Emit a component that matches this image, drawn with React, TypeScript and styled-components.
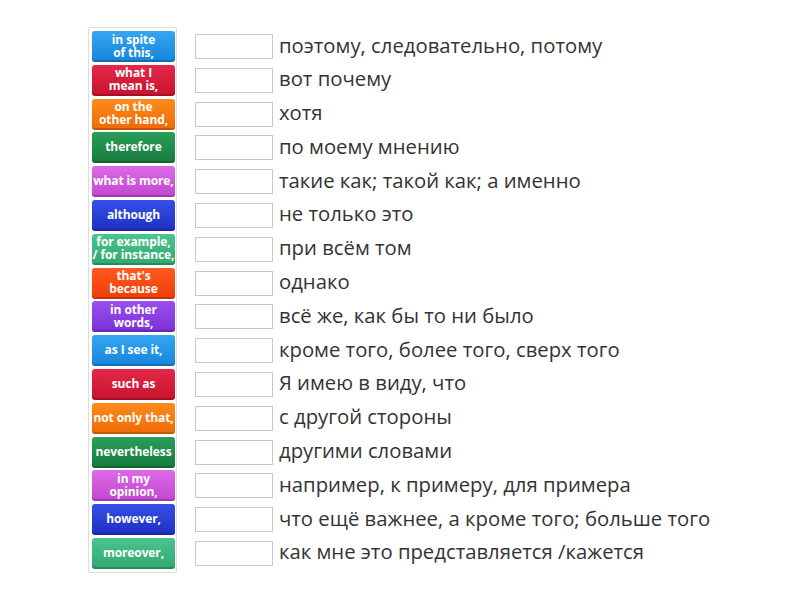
import styled, { createGlobalStyle } from 'styled-components'

const GlobalStyle = createGlobalStyle`
  html, body {
    margin: 0;
    padding: 0;
    background: #ffffff;
  }
  body {
    font-family: 'Open Sans', 'Liberation Sans', sans-serif;
  }
`

const palette = {
  blue: ['#36a6f2', '#1684dc'],
  red: ['#e62848', '#c5122f'],
  orange: ['#ff8a1c', '#ee6a05'],
  green: ['#2a9e58', '#177a3c'],
  magenta: ['#dc6ae6', '#c047d0'],
  navy: ['#3550e6', '#1f2fc4'],
  teal: ['#4cc490', '#30a86f'],
  vermilion: ['#ff5a1e', '#ef3d08'],
  purple: ['#9a50ee', '#7a30d6'],
} as const

type Tone = keyof typeof palette

const tiles: { label: string; tone: Tone }[] = [
  { label: 'in spite\nof this,', tone: 'blue' },
  { label: 'what I\nmean is,', tone: 'red' },
  { label: 'on the\nother hand,', tone: 'orange' },
  { label: 'therefore', tone: 'green' },
  { label: 'what is more,', tone: 'magenta' },
  { label: 'although', tone: 'navy' },
  { label: 'for example,\n/ for instance,', tone: 'teal' },
  { label: "that's\nbecause", tone: 'vermilion' },
  { label: 'in other\nwords,', tone: 'purple' },
  { label: 'as I see it,', tone: 'blue' },
  { label: 'such as', tone: 'red' },
  { label: 'not only that,', tone: 'orange' },
  { label: 'nevertheless', tone: 'green' },
  { label: 'in my\nopinion,', tone: 'magenta' },
  { label: 'however,', tone: 'navy' },
  { label: 'moreover,', tone: 'teal' },
]

const meanings = [
  'поэтому, следовательно, потому',
  'вот почему',
  'хотя',
  'по моему мнению',
  'такие как; такой как; а именно',
  'не только это',
  'при всём том',
  'однако',
  'всё же, как бы то ни было',
  'кроме того, более того, сверх того',
  'Я имею в виду, что',
  'с другой стороны',
  'другими словами',
  'например, к примеру, для примера',
  'что ещё важнее, а кроме того; больше того',
  'как мне это представляется /кажется',
]

const Page = styled.div`
  display: flex;
  gap: 18px;
  padding: 27px 0 0 88px;
`

const Bank = styled.div`
  width: 83px;
  padding: 3px 1px 3px 3px;
  border: 1px solid #dcdcdc;
  border-radius: 2px;
  display: flex;
  flex-direction: column;
  gap: 2.8px;
`

const Tile = styled.div<{ $tone: Tone }>`
  height: 31px;
  border-radius: 3px;
  background: linear-gradient(
    to bottom,
    ${({ $tone }) => palette[$tone][0]},
    ${({ $tone }) => palette[$tone][1]}
  );
  box-shadow: inset 0 -2px 0 rgba(0, 0, 0, 0.18);
  color: #ffffff;
  font-family: 'Open Sans', 'Liberation Sans', sans-serif;
  font-weight: 700;
  font-size: 12px;
  line-height: 13px;
  letter-spacing: -0.1px;
  text-align: center;
  white-space: pre;
  overflow: hidden;
  display: flex;
  align-items: center;
  justify-content: center;
  padding-bottom: 2px;
  box-sizing: border-box;
`

const Targets = styled.div`
  display: flex;
  flex-direction: column;
  gap: 2.8px;
  padding-top: 4px;
`

const Row = styled.div`
  height: 31px;
  display: flex;
  align-items: center;
  gap: 6px;
`

const Slot = styled.div`
  width: 78px;
  height: 25px;
  flex-shrink: 0;
  box-sizing: border-box;
  border: 1px solid #c8c8c8;
  background: #ffffff;
`

const Meaning = styled.span`
  font-family: 'Open Sans', 'Liberation Sans', sans-serif;
  font-size: 20.3px;
  line-height: 26px;
  color: #333333;
  white-space: nowrap;
  margin-top: -4px;
`

export default function App() {
  return (
    <>
      <GlobalStyle />
      <Page>
        <Bank>
          {tiles.map((t) => (
            <Tile key={t.label} $tone={t.tone}>
              {t.label}
            </Tile>
          ))}
        </Bank>
        <Targets>
          {meanings.map((m) => (
            <Row key={m}>
              <Slot />
              <Meaning>{m}</Meaning>
            </Row>
          ))}
        </Targets>
      </Page>
    </>
  )
}
